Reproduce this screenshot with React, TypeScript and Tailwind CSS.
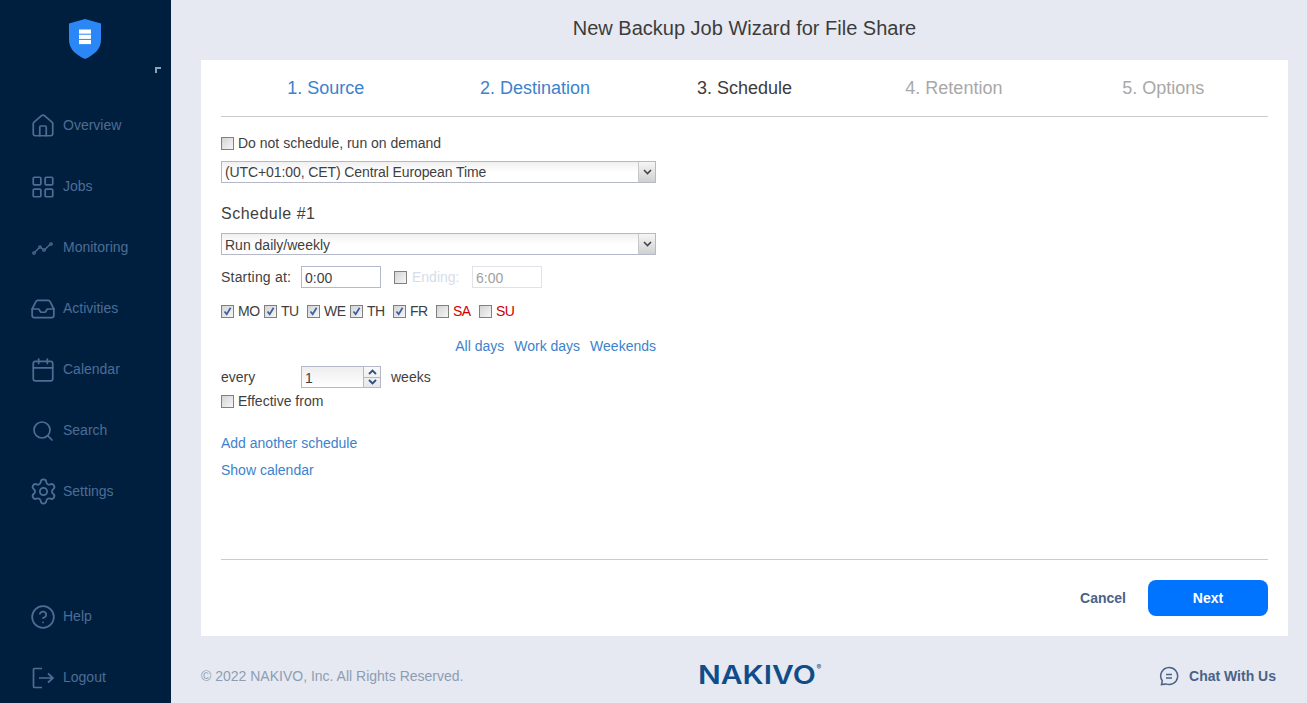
import React from "react";
import { Calendar, House, Inbox, LayoutGrid, Search, Settings, CircleHelp } from "lucide-react";

const ICON = "w-[26px] h-[26px] shrink-0 text-[#4d6d94]";
const ICON_S = "w-[24px] h-[24px] shrink-0 text-[#4d6d94]";
const ICON_L = "w-[29px] h-[29px] shrink-0 text-[#4d6d94]";
const CUSTOM = "w-[22px] h-[22px] shrink-0 text-[#4d6d94]";

function MonitorIcon() {
  return (
    <svg viewBox="0 0 22 22" className={CUSTOM} fill="none" stroke="currentColor" strokeWidth="1.3">
      <path d="M2.8 15.2 7.2 10.8M8.9 10.6 11.1 12.4M12.8 12.4 18.1 7.6" />
      <circle cx="2" cy="16" r="1.2" />
      <circle cx="8" cy="10" r="1.2" />
      <circle cx="12" cy="13" r="1.2" />
      <circle cx="19" cy="7" r="1.2" />
    </svg>
  );
}

function LogoutIcon() {
  return (
    <svg viewBox="0 0 22 22" className={CUSTOM} fill="none" stroke="currentColor" strokeWidth="1.7">
      <path d="M10 1.5H2.5a1 1 0 0 0-1 1v17a1 1 0 0 0 1 1H10" />
      <path d="M7 11h14M16 6.5l5 4.5-5 4.5" />
    </svg>
  );
}

function NavItem({ icon, label }: { icon: React.ReactNode; label: string }) {
  return (
    <div className="h-[61px] shrink-0 flex items-center pl-[32px] gap-[9px]">
      <div className="w-[22px] flex items-center justify-center">{icon}</div>
      <span className="text-[14px] text-[#4d6d94]">{label}</span>
    </div>
  );
}

function Box({ checked }: { checked?: boolean }) {
  return (
    <span className="w-[13px] h-[13px] shrink-0 border border-[#808080] bg-gradient-to-br from-[#d4d4d4] to-[#f6f6f6] flex items-center justify-center">
      {checked && (
        <svg viewBox="0 0 11 11" className="w-[11px] h-[11px]" fill="none" stroke="#3a5f9e" strokeWidth="1.7">
          <path d="M2.5 5.5 4.7 8.3 8.6 1.8" />
        </svg>
      )}
    </span>
  );
}

function Check({ label, checked, red, tight }: { label: string; checked?: boolean; red?: boolean; tight?: boolean }) {
  return (
    <label className="flex items-center gap-[4px]">
      <Box checked={checked} />
      <span className={`${red ? "text-[#cc0000]" : "text-[#3f3f3f]"} ${tight ? "tracking-[-0.5px]" : ""}`}>{label}</span>
    </label>
  );
}

function Select({ value, first }: { value: string; first?: boolean }) {
  return (
    <div className="w-[435px] h-[22px] border border-[#b5b8c8] flex bg-gradient-to-b from-[#f0f0f0] via-white to-white">
      <div className={`flex-1 pl-[3px] text-[#3f3f3f] whitespace-nowrap overflow-hidden ${first ? "leading-[20px] tracking-[-0.1px]" : "leading-[22px]"}`}>{value}</div>
      <div className="w-[17px] border-l border-[#c8c8c8] bg-gradient-to-b from-[#f6f6f6] to-[#d0d0d0] flex items-center justify-center">
        <svg viewBox="0 0 9 6" className="w-[9px] h-[6px]" fill="none" stroke="#444444" strokeWidth="1.6">
          <path d="M1 1l3.5 3.5L8 1" />
        </svg>
      </div>
    </div>
  );
}

const DAYS = [
  { label: "MO", checked: true },
  { label: "TU", checked: true },
  { label: "WE", checked: true },
  { label: "TH", checked: true },
  { label: "FR", checked: true },
  { label: "SA", red: true },
  { label: "SU", red: true },
];

const STEPS = [
  { t: "1. Source", c: "text-[#3d82cc]" },
  { t: "2. Destination", c: "text-[#3d82cc]" },
  { t: "3. Schedule", c: "text-[#3c3c3c]" },
  { t: "4. Retention", c: "text-[#a8a8a8]" },
  { t: "5. Options", c: "text-[#a8a8a8]" },
];

export default function App() {
  return (
    <div className="w-[1307px] h-[703px] flex overflow-hidden bg-[#e6e9f1] font-['Liberation_Sans',Arial,sans-serif]">
      <aside className="w-[171px] shrink-0 bg-[#001f3f] flex flex-col relative overflow-hidden">
        <div className="h-[95px] shrink-0 flex justify-center pt-[19px] pr-[1px]">
          <svg viewBox="0 0 32 40" className="w-[32px] h-[40px]">
            <path d="M16 0 32 4.5V21c0 9-7 15-16 19C7 36 0 30 0 21V4.5Z" fill="#2b87f5" />
            <rect x="10" y="10.5" width="12" height="4.2" fill="#fff" />
            <rect x="10" y="15.7" width="12" height="4.2" fill="#fff" />
            <rect x="10" y="20.9" width="12" height="4.2" fill="#fff" />
          </svg>
        </div>
        <span className="absolute left-[155px] top-[67px] w-[6px] h-[6px] border-l-2 border-t-2 border-[#8fa3b8]" />
        <NavItem label="Overview" icon={<House className={ICON} strokeWidth={1.6} />} />
        <NavItem label="Jobs" icon={<LayoutGrid className={ICON} strokeWidth={1.6} />} />
        <NavItem label="Monitoring" icon={<MonitorIcon />} />
        <NavItem label="Activities" icon={<Inbox className={ICON} strokeWidth={1.6} />} />
        <NavItem label="Calendar" icon={<Calendar className={ICON} strokeWidth={1.6} />} />
        <NavItem label="Search" icon={<Search className={ICON_S} strokeWidth={1.7} />} />
        <NavItem label="Settings" icon={<Settings className={ICON_L} strokeWidth={1.5} />} />
        <div className="mt-[64px] shrink-0">
          <NavItem label="Help" icon={<CircleHelp className={ICON} strokeWidth={1.6} />} />
          <NavItem label="Logout" icon={<LogoutIcon />} />
        </div>
      </aside>

      <main className="flex-1 flex flex-col">
        <h1 className="ml-[30px] w-[1087px] h-[60px] pt-[15px] text-center text-[20px] leading-[26px] text-[#3c3c3c]">
          New Backup Job Wizard for File Share
        </h1>
        <div className="ml-[30px] w-[1087px] h-[576px] bg-white px-[20px] flex flex-col">
          <div className="h-[57px] grid grid-cols-5 border-b border-[#cccccc] items-center">
            {STEPS.map((s) => (
              <div key={s.t} className={`text-center text-[18px] pt-[1px] ${s.c}`}>
                {s.t}
              </div>
            ))}
          </div>

          <div className="flex-1 text-[14px] text-[#3f3f3f]">
            <div className="mt-[16px] h-[20px] flex items-center">
              <Check label="Do not schedule, run on demand" />
            </div>
            <div className="mt-[8px]">
              <Select first value="(UTC+01:00, CET) Central European Time" />
            </div>
            <div className="mt-[21px] h-[20px] text-[16px] leading-[20px] tracking-[0.5px]">Schedule #1</div>
            <div className="mt-[9px]">
              <Select value="Run daily/weekly" />
            </div>
            <div className="mt-[11px] h-[22px] flex items-center">
              <span className="w-[80px] tracking-[0.2px]">Starting at:</span>
              <div className="w-[80px] h-[22px] border border-[#b5b8c8] pl-[3px] leading-[22px]">0:00</div>
              <span className="ml-[13px]"><Box /></span>
              <span className="ml-[5px] w-[60px] text-[#d5dde8]">Ending:</span>
              <div className="w-[70px] h-[22px] border border-[#dfe2e8] pl-[3px] leading-[22px] text-[#a0a0a0]">6:00</div>
            </div>
            <div className="mt-[13px] h-[20px] flex items-center">
              {DAYS.map((d) => (
                <div key={d.label} className="w-[43px]">
                  <Check label={d.label} checked={d.checked} red={d.red} tight />
                </div>
              ))}
            </div>
            <div className="mt-[15px] h-[20px] w-[435px] flex items-center justify-end gap-[10px] text-[#3d82cc]">
              <span>All days</span>
              <span>Work days</span>
              <span>Weekends</span>
            </div>
            <div className="mt-[10px] h-[22px] flex items-center">
              <span className="w-[80px]">every</span>
              <div className="w-[80px] h-[22px] border border-[#b5b8c8] flex">
                <div className="flex-1 pl-[3px] leading-[22px] bg-gradient-to-b from-[#eeeeee] to-white">1</div>
                <div className="w-[17px] border-l border-[#b5b8c8] flex flex-col bg-gradient-to-b from-[#f8f8f8] to-[#e8e8e8]">
                  <div className="flex-1 flex items-center justify-center border-b border-[#b5b8c8]">
                    <svg viewBox="0 0 9 6" className="w-[9px] h-[6px]" fill="none" stroke="#2f4f7f" strokeWidth="1.8"><path d="M1 5l3.5-3.5L8 5" /></svg>
                  </div>
                  <div className="flex-1 flex items-center justify-center">
                    <svg viewBox="0 0 9 6" className="w-[9px] h-[6px]" fill="none" stroke="#2f4f7f" strokeWidth="1.8"><path d="M1 1l3.5 3.5L8 1" /></svg>
                  </div>
                </div>
              </div>
              <span className="ml-[10px]">weeks</span>
            </div>
            <div className="mt-[3px] h-[20px] flex items-center">
              <Check label="Effective from" />
            </div>
            <div className="mt-[22px] h-[20px] leading-[20px] text-[#3d82cc]">Add another schedule</div>
            <div className="mt-[7px] h-[20px] leading-[20px] text-[#3d82cc]">Show calendar</div>
          </div>

          <div className="h-[77px] border-t border-[#cccccc] flex items-center justify-end">
            <span className="mr-[22px] text-[14px] font-bold text-[#4a6288]">Cancel</span>
            <button className="w-[120px] h-[36px] rounded-[8px] bg-[#0073ff] text-white text-[14px] font-bold">Next</button>
          </div>
        </div>

        <footer className="flex-1 flex items-center pt-[13px] pl-[30px] pr-[31px] text-[14px]">
          <span className="text-[#8d9db3]">© 2022 NAKIVO, Inc. All Rights Reserved.</span>
          <span className="ml-[235px] -mt-[2px] flex items-start text-[#0f4c8a] font-['Inter',sans-serif] text-[25px] font-semibold leading-none">
            <span className="inline-block origin-left scale-x-[1.2]">NAKIVO</span>
            <span className="ml-[20px] text-[7px] font-normal leading-[10px]">®</span>
          </span>
          <div className="ml-auto flex items-center gap-[10px] font-bold text-[#4a6288]">
            <svg viewBox="0 0 20 20" className="w-[20px] h-[20px]" fill="none" stroke="#4a6288" strokeWidth="1.5">
              <path d="M10 1.5a8.5 8.5 0 1 1-3 16.4L2.5 18.5l.8-3.6A8.5 8.5 0 0 1 10 1.5Z" />
              <path d="M7 8.5h6M7 12h6" />
            </svg>
            <span>Chat With Us</span>
          </div>
        </footer>
      </main>
    </div>
  );
}
